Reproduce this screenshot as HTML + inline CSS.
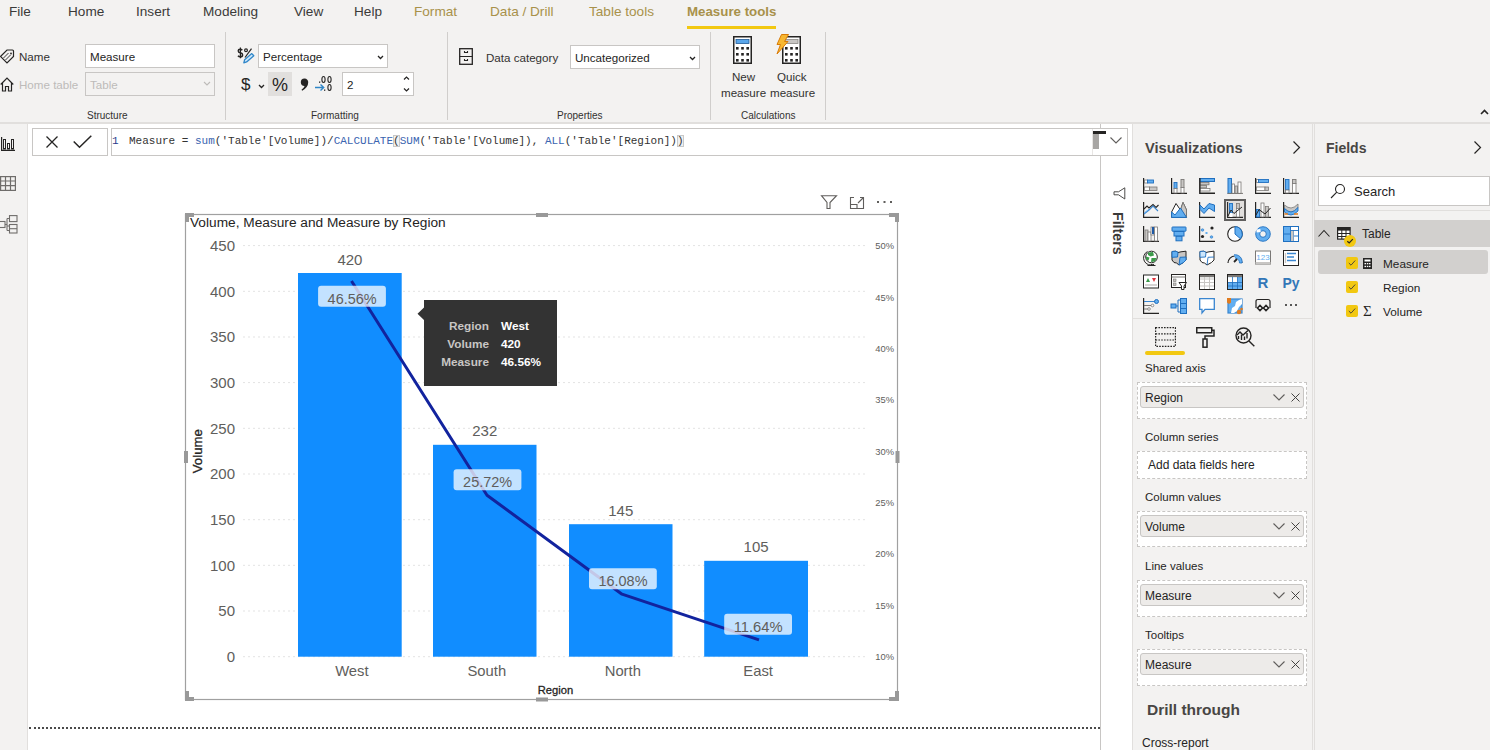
<!DOCTYPE html>
<html><head><meta charset="utf-8">
<style>
*{margin:0;padding:0;box-sizing:border-box}
html,body{width:1490px;height:750px;overflow:hidden;background:#f3f2f1;font-family:"Liberation Sans",sans-serif;color:#252423}
.a{position:absolute;white-space:nowrap}
.tab{position:absolute;top:3.8px;font-size:13.6px;color:#3b3a39}
.ctx{color:#a8914a}
.sep{position:absolute;width:1px;background:#d0cecc}
.box{position:absolute;background:#fff;border:1px solid #c8c6c4}
.grp{position:absolute;top:110px;font-size:10px;color:#323130}
.lbl{position:absolute;font-size:11.6px;color:#323130}
svg{position:absolute;overflow:visible}
.mono{font-family:"Liberation Mono",monospace}
</style></head>
<body>
<!-- ===== RIBBON ===== -->
<div id="ribbon" class="a" style="left:0;top:0;width:1490px;height:124px;background:#f3f2f1;border-bottom:2px solid #e1dfdd"></div>
<div class="tab" style="left:9px">File</div>
<div class="tab" style="left:68px">Home</div>
<div class="tab" style="left:136px">Insert</div>
<div class="tab" style="left:203px">Modeling</div>
<div class="tab" style="left:294px">View</div>
<div class="tab" style="left:354px">Help</div>
<div class="tab ctx" style="left:414px">Format</div>
<div class="tab ctx" style="left:490px">Data / Drill</div>
<div class="tab ctx" style="left:589px">Table tools</div>
<div class="tab ctx" style="left:687px;font-weight:bold;font-size:13.3px;top:4.3px">Measure tools</div>
<div class="a" style="left:687px;top:26px;width:89px;height:3px;background:#f2c811"></div>


<!-- Structure group -->
<svg style="left:0;top:49px" width="16" height="16" viewBox="0 0 16 16"><path d="M1.5 8.5 L8 2 L13.5 2 Q14.5 2 14.5 3 L14.5 8.5 L8 15 Z" fill="none" stroke="#252423" stroke-width="1.2" transform="translate(-1,-1)"/><circle cx="11" cy="4.5" r="0.9" fill="#252423"/><path d="M3.5 9 L8.5 4 M5.5 11 L10.5 6" stroke="#252423" stroke-width="0.9"/></svg>
<div class="lbl" style="left:19px;top:50px">Name</div>
<div class="box" style="left:85px;top:44px;width:130px;height:24px"></div>
<div class="lbl" style="left:90px;top:50px;color:#252423">Measure</div>
<svg style="left:0;top:76px" width="16" height="16" viewBox="0 0 16 16"><path d="M0.7 8.5 L7 2 L13.3 8.5 M2.5 6.5 L2.5 15 L5.5 15 L5.5 10.5 L8.5 10.5 L8.5 15 L11.5 15 L11.5 6.5" fill="none" stroke="#252423" stroke-width="1.2"/></svg>
<div class="lbl" style="left:19px;top:78px;color:#bdbbb9">Home table</div>
<div class="a" style="left:85px;top:72px;width:130px;height:24px;border:1px solid #c8c6c4;background:#f3f2f1"></div>
<div class="lbl" style="left:90px;top:78px;color:#bdbbb9">Table</div>
<svg style="left:203px;top:81px" width="8" height="5" viewBox="0 0 8 5"><path d="M1 1 L4 4 L7 1" fill="none" stroke="#bdbbb9" stroke-width="1.1"/></svg>
<div class="grp" style="left:87px">Structure</div>
<div class="sep" style="left:225px;top:32px;height:88px"></div>

<!-- Formatting group -->
<svg style="left:230px;top:40px" width="28" height="28" viewBox="230 40 28 28"><g fill="none" stroke="#252423"><path d="M242.3 50.2 Q241.5 49.2 240.2 49.2 Q238.3 49.2 238.3 50.9 Q238.3 52.3 240.4 52.8 Q242.6 53.4 242.6 55 Q242.6 56.8 240.3 56.8 Q238.8 56.8 238 55.7" stroke-width="1.5"/><path d="M240.4 47.6 V58.3" stroke-width="1.2"/><path d="M251.5 48.6 L245 57.5" stroke-width="1.2"/><circle cx="246" cy="50.3" r="1.4" stroke-width="1.2"/></g><path d="M243.8 62.8 L244.6 59.8 L251.8 53.6 L253.8 55.7 L246.6 61.9 Z" fill="#cfe8fb" stroke="#2f86c8" stroke-width="1.3" stroke-linejoin="round"/></svg>
<div class="box" style="left:258px;top:44px;width:130px;height:24px"></div>
<div class="lbl" style="left:263px;top:50px;color:#252423">Percentage</div>
<svg style="left:377px;top:55px" width="7" height="5" viewBox="0 0 7 5"><path d="M1 1 L3.5 3.5 L6 1" fill="none" stroke="#252423" stroke-width="1.3"/></svg>
<div class="a" style="left:241px;top:75px;font-size:17px;color:#252423">$</div>
<svg style="left:258px;top:84px" width="7" height="5" viewBox="0 0 7 5"><path d="M1 1 L3.5 3.5 L6 1" fill="none" stroke="#252423" stroke-width="1.3"/></svg>
<div class="a" style="left:268px;top:72px;width:24px;height:24px;background:#e1dfdd"></div>
<div class="a" style="left:272px;top:75px;font-size:18px;color:#252423">%</div>
<svg style="left:300px;top:77.5px" width="9" height="14" viewBox="0 0 9 14"><path d="M4.5 0.5 A3.6 3.6 0 0 1 8.2 4.5 Q8.2 9.2 2.2 12.8 L1.5 11.8 Q4.3 9.7 4.6 8 A3.7 3.7 0 1 1 4.5 0.5 Z" fill="#252423"/></svg>
<svg style="left:314px;top:74px" width="20" height="20" viewBox="314 74 20 20"><g fill="none" stroke="#252423" stroke-width="1.1"><ellipse cx="323.5" cy="79.5" rx="1.6" ry="3"/><ellipse cx="329.5" cy="79.5" rx="1.6" ry="3"/><ellipse cx="329.5" cy="87.5" rx="1.6" ry="3"/></g><g fill="#252423"><rect x="319" y="81.5" width="1.3" height="1.3"/><rect x="324" y="89.5" width="1.3" height="1.3"/></g><path d="M315 87.5 L323.5 87.5 M320.5 84.5 L323.7 87.5 L320.5 90.5" fill="none" stroke="#2f86c8" stroke-width="1.4"/></svg>
<div class="box" style="left:342px;top:72px;width:72px;height:24px"></div>
<div class="lbl" style="left:347px;top:78px;color:#252423">2</div>
<svg style="left:403px;top:75px" width="7" height="18" viewBox="0 0 7 18"><path d="M1 4.5 L3.5 2 L6 4.5 M1 13.5 L3.5 16 L6 13.5" fill="none" stroke="#252423" stroke-width="1.2"/></svg>
<div class="grp" style="left:311px">Formatting</div>
<div class="sep" style="left:447px;top:32px;height:88px"></div>

<!-- Properties group -->
<svg style="left:459px;top:48px" width="14" height="17" viewBox="0 0 14 17"><rect x="0.7" y="0.7" width="12.6" height="15.6" fill="none" stroke="#252423" stroke-width="1.3"/><path d="M0.7 8.5 L13.3 8.5 M5.5 3 L5.5 4.5 L8.5 4.5 L8.5 3 M5.5 11 L5.5 12.5 L8.5 12.5 L8.5 11" fill="none" stroke="#252423" stroke-width="1.1"/></svg>
<div class="lbl" style="left:486px;top:51px">Data category</div>
<div class="box" style="left:570px;top:45px;width:130px;height:24px"></div>
<div class="lbl" style="left:575px;top:51px;color:#252423">Uncategorized</div>
<svg style="left:689px;top:56px" width="7" height="5" viewBox="0 0 7 5"><path d="M1 1 L3.5 3.5 L6 1" fill="none" stroke="#252423" stroke-width="1.3"/></svg>
<div class="grp" style="left:557px">Properties</div>
<div class="sep" style="left:710px;top:32px;height:88px"></div>

<!-- Calculations group -->
<svg style="left:733px;top:36px" width="19" height="28" viewBox="0 0 19 28"><rect x="0.75" y="0.75" width="17.5" height="26.5" fill="#fff" stroke="#252423" stroke-width="1.5"/><rect x="3" y="3.5" width="13" height="4" fill="#5aa6ea" stroke="#1e5a96" stroke-width="0.8"/><g fill="#252423"><rect x="3" y="11" width="2.6" height="2.6"/><rect x="8.2" y="11" width="2.6" height="2.6"/><rect x="13.4" y="11" width="2.6" height="2.6"/><rect x="3" y="17" width="2.6" height="2.6"/><rect x="8.2" y="17" width="2.6" height="2.6"/><rect x="13.4" y="17" width="2.6" height="2.6"/><rect x="3" y="23" width="2.6" height="2.6"/><rect x="8.2" y="23" width="2.6" height="2.6"/><rect x="13.4" y="23" width="2.6" height="2.6"/></g></svg>
<svg style="left:782px;top:36px" width="19" height="28" viewBox="0 0 19 28"><rect x="0.75" y="0.75" width="17.5" height="26.5" fill="#fff" stroke="#252423" stroke-width="1.5"/><rect x="3" y="3.5" width="13" height="4" fill="#c8c6c4" stroke="#8a8886" stroke-width="0.8"/><g fill="#252423"><rect x="3" y="11" width="2.6" height="2.6"/><rect x="8.2" y="11" width="2.6" height="2.6"/><rect x="13.4" y="11" width="2.6" height="2.6"/><rect x="3" y="17" width="2.6" height="2.6"/><rect x="8.2" y="17" width="2.6" height="2.6"/><rect x="13.4" y="17" width="2.6" height="2.6"/><rect x="3" y="23" width="2.6" height="2.6"/><rect x="8.2" y="23" width="2.6" height="2.6"/><rect x="13.4" y="23" width="2.6" height="2.6"/></g></svg>
<svg style="left:776px;top:34px" width="14" height="21" viewBox="0 0 14 21"><path d="M5.5 0.5 L12.5 0.5 L8.5 7.5 L12 7.5 L1 20 L4.5 10.5 L1 10.5 Z" fill="#f7b731" stroke="#d97b06" stroke-width="1"/></svg>
<div class="lbl" style="left:732px;top:70px">New</div>
<div class="lbl" style="left:721px;top:86px">measure</div>
<div class="lbl" style="left:777px;top:70px">Quick</div>
<div class="lbl" style="left:770px;top:86px">measure</div>
<div class="grp" style="left:741px">Calculations</div>
<div class="sep" style="left:825px;top:32px;height:88px"></div>
<svg style="left:1480px;top:109px" width="9" height="6" viewBox="0 0 9 6"><path d="M1 5 L4.5 1.5 L8 5" fill="none" stroke="#252423" stroke-width="1.6"/></svg>


<!-- ===== LEFT NAV ===== -->
<div class="a" style="left:0;top:124px;width:28px;height:626px;background:#f3f2f1;border-right:1px solid #e1dfdd"></div>
<svg style="left:1px;top:137px" width="15" height="14" viewBox="0 0 15 14"><path d="M0.6 0 L0.6 13.4 L14 13.4" fill="none" stroke="#252423" stroke-width="1.2"/><g fill="none" stroke="#252423" stroke-width="1"><rect x="2.5" y="2.5" width="2" height="9.5"/><rect x="6.5" y="6.5" width="2" height="5.5"/><rect x="10.5" y="2.5" width="2" height="9.5"/></g></svg>
<svg style="left:0;top:176px" width="16" height="15" viewBox="0 0 16 15"><rect x="0.6" y="0.6" width="14.8" height="13.8" fill="none" stroke="#6f6d6b" stroke-width="1.2"/><path d="M0.6 5 L15.4 5 M0.6 9.7 L15.4 9.7 M5.5 0.6 L5.5 14.4 M10.5 0.6 L10.5 14.4" stroke="#6f6d6b" stroke-width="1.2"/></svg>
<svg style="left:0;top:215px" width="18" height="19" viewBox="0 0 18 19"><g fill="none" stroke="#6f6d6b" stroke-width="1.1"><rect x="9.5" y="0.6" width="7.5" height="6"/><rect x="9.5" y="9.5" width="7.5" height="8.5"/><path d="M9.5 13.7 H17"/><rect x="-2" y="6.5" width="7" height="6"/><path d="M5 9.5 H7 M7 3.5 V15.5 M7 3.5 H9.5 M7 11 H9.5 M7 15.5 H9.5"/></g></svg>

<!-- ===== CANVAS ===== -->
<div class="a" style="left:28px;top:124px;width:1073px;height:626px;background:#fff"></div>
<div class="a" style="left:29px;top:727px;width:1071px;height:0;border-top:2px dotted #4a4a4a"></div>

<!-- ===== CHART ===== -->
<svg style="left:0;top:0" width="1490" height="750" viewBox="0 0 1490 750" font-family="Liberation Sans, sans-serif">
<g fill="none" stroke="#605e5c" stroke-width="1.1"><path d="M821.5 195.7 L836.5 195.7 L830 202.5 L830 208.5 L827 208.5 L827 202.5 Z"/><path d="M854 197.5 L850.5 197.5 L850.5 208.5 L863.5 208.5 L863.5 197.5 L860 197.5 M850.5 204.5 L857 204.5 L857 208.5 M858 203 L863 198"/></g>
<g fill="#605e5c"><rect x="877" y="201" width="2" height="2"/><rect x="883.5" y="201" width="2" height="2"/><rect x="890" y="201" width="2" height="2"/></g>
<line x1="243" y1="656.7" x2="867" y2="656.7" stroke="#e3e3e3" stroke-width="1" stroke-dasharray="2 3"/>
<text x="235" y="662.0" font-size="15" fill="#605e5c" text-anchor="end">0</text>
<line x1="243" y1="611.0" x2="867" y2="611.0" stroke="#e3e3e3" stroke-width="1" stroke-dasharray="2 3"/>
<text x="235" y="616.3" font-size="15" fill="#605e5c" text-anchor="end">50</text>
<line x1="243" y1="565.3" x2="867" y2="565.3" stroke="#e3e3e3" stroke-width="1" stroke-dasharray="2 3"/>
<text x="235" y="570.6" font-size="15" fill="#605e5c" text-anchor="end">100</text>
<line x1="243" y1="519.7" x2="867" y2="519.7" stroke="#e3e3e3" stroke-width="1" stroke-dasharray="2 3"/>
<text x="235" y="525.0" font-size="15" fill="#605e5c" text-anchor="end">150</text>
<line x1="243" y1="474.0" x2="867" y2="474.0" stroke="#e3e3e3" stroke-width="1" stroke-dasharray="2 3"/>
<text x="235" y="479.3" font-size="15" fill="#605e5c" text-anchor="end">200</text>
<line x1="243" y1="428.3" x2="867" y2="428.3" stroke="#e3e3e3" stroke-width="1" stroke-dasharray="2 3"/>
<text x="235" y="433.6" font-size="15" fill="#605e5c" text-anchor="end">250</text>
<line x1="243" y1="382.6" x2="867" y2="382.6" stroke="#e3e3e3" stroke-width="1" stroke-dasharray="2 3"/>
<text x="235" y="387.9" font-size="15" fill="#605e5c" text-anchor="end">300</text>
<line x1="243" y1="337.0" x2="867" y2="337.0" stroke="#e3e3e3" stroke-width="1" stroke-dasharray="2 3"/>
<text x="235" y="342.3" font-size="15" fill="#605e5c" text-anchor="end">350</text>
<line x1="243" y1="291.3" x2="867" y2="291.3" stroke="#e3e3e3" stroke-width="1" stroke-dasharray="2 3"/>
<text x="235" y="296.6" font-size="15" fill="#605e5c" text-anchor="end">400</text>
<line x1="243" y1="245.6" x2="867" y2="245.6" stroke="#e3e3e3" stroke-width="1" stroke-dasharray="2 3"/>
<text x="235" y="250.9" font-size="15" fill="#605e5c" text-anchor="end">450</text>
<text x="894" y="660.1" font-size="9.4" fill="#605e5c" text-anchor="end">10%</text>
<text x="894" y="608.7" font-size="9.4" fill="#605e5c" text-anchor="end">15%</text>
<text x="894" y="557.4" font-size="9.4" fill="#605e5c" text-anchor="end">20%</text>
<text x="894" y="506.0" font-size="9.4" fill="#605e5c" text-anchor="end">25%</text>
<text x="894" y="454.6" font-size="9.4" fill="#605e5c" text-anchor="end">30%</text>
<text x="894" y="403.2" font-size="9.4" fill="#605e5c" text-anchor="end">35%</text>
<text x="894" y="351.9" font-size="9.4" fill="#605e5c" text-anchor="end">40%</text>
<text x="894" y="300.5" font-size="9.4" fill="#605e5c" text-anchor="end">45%</text>
<text x="894" y="249.1" font-size="9.4" fill="#605e5c" text-anchor="end">50%</text>
<rect x="298" y="273.0" width="103.7" height="383.7" fill="#118dff"/>
<text x="349.9" y="264.5" font-size="15" fill="#605e5c" text-anchor="middle">420</text>
<text x="351.9" y="676" font-size="14.8" fill="#605e5c" text-anchor="middle">West</text>
<rect x="433" y="444.8" width="103.5" height="211.9" fill="#118dff"/>
<text x="484.8" y="436.3" font-size="15" fill="#605e5c" text-anchor="middle">232</text>
<text x="486.8" y="676" font-size="14.8" fill="#605e5c" text-anchor="middle">South</text>
<rect x="569" y="524.2" width="103.5" height="132.5" fill="#118dff"/>
<text x="620.8" y="515.7" font-size="15" fill="#605e5c" text-anchor="middle">145</text>
<text x="622.8" y="676" font-size="14.8" fill="#605e5c" text-anchor="middle">North</text>
<rect x="704.2" y="560.8" width="103.8" height="95.9" fill="#118dff"/>
<text x="756.1" y="552.3" font-size="15" fill="#605e5c" text-anchor="middle">105</text>
<text x="758.1" y="676" font-size="14.8" fill="#605e5c" text-anchor="middle">East</text>
<polyline points="351.5,281.0 487.0,495.2 622.0,594.2 759.0,639.8" fill="none" stroke="#12239e" stroke-width="3" stroke-linejoin="round"/>
<rect x="318.1" y="285.8" width="67.8" height="21" rx="3" fill="#fff" fill-opacity="0.75"/>
<text x="352.1" y="303.5" font-size="15.2" fill="#605e5c" text-anchor="middle" textLength="49" lengthAdjust="spacingAndGlyphs">46.56%</text>
<rect x="453.6" y="469.2" width="67.8" height="21" rx="3" fill="#fff" fill-opacity="0.75"/>
<text x="487.6" y="486.9" font-size="15.2" fill="#605e5c" text-anchor="middle" textLength="49" lengthAdjust="spacingAndGlyphs">25.72%</text>
<rect x="589.0" y="568.2" width="67.8" height="21" rx="3" fill="#fff" fill-opacity="0.75"/>
<text x="623.0" y="585.9" font-size="15.2" fill="#605e5c" text-anchor="middle" textLength="49" lengthAdjust="spacingAndGlyphs">16.08%</text>
<rect x="724.2" y="613.8" width="67.8" height="21" rx="3" fill="#fff" fill-opacity="0.75"/>
<text x="758.2" y="631.5" font-size="15.2" fill="#605e5c" text-anchor="middle" textLength="49" lengthAdjust="spacingAndGlyphs">11.64%</text>
<text x="190" y="227" font-size="13.7" fill="#252423">Volume, Measure and Measure by Region</text>
<text x="555.5" y="694" font-size="11.2" fill="#252423" stroke="#252423" stroke-width="0.3" text-anchor="middle">Region</text>
<text transform="translate(202,451.2) rotate(-90)" font-size="13.2" fill="#252423" stroke="#252423" stroke-width="0.3" text-anchor="middle">Volume</text>
<rect x="185.5" y="214.5" width="712" height="485" fill="none" stroke="#a0a0a0" stroke-width="1.2"/>
<g fill="#999"><path d="M185 213 L194 213 L194 217 L189 217 L189 222 L185 222 Z"/><path d="M889 213 L899 213 L899 222 L895 222 L895 217 L889 217 Z"/><path d="M185 691 L189 691 L189 697 L194 697 L194 701 L185 701 Z"/><path d="M895 691 L899 691 L899 701 L889 701 L889 697 L895 697 Z"/><rect x="536" y="213" width="12" height="4"/><rect x="536" y="697.5" width="12" height="4"/><rect x="184" y="451" width="4" height="12"/><rect x="895.5" y="451" width="4" height="12"/></g>
<path d="M424 300 L557 300 L557 386 L424 386 L424 320 L417.5 313.8 L424 307.5 Z" fill="#333333"/>
<g font-size="11.8" font-weight="bold"><text x="489" y="330" fill="#c8c6c4" text-anchor="end">Region</text><text x="501" y="330" fill="#fff">West</text><text x="489" y="348" fill="#c8c6c4" text-anchor="end">Volume</text><text x="501" y="348" fill="#fff">420</text><text x="489" y="366" fill="#c8c6c4" text-anchor="end">Measure</text><text x="501" y="366" fill="#fff">46.56%</text></g>
</svg>
<!-- ===== FILTERS STRIP ===== -->
<div class="a" style="left:1100px;top:124px;width:33px;height:626px;background:#fff;border-left:1px solid #c8c6c4"></div>
<div class="a" style="left:1132px;top:124px;width:1px;height:626px;background:#e1dfdd"></div>
<svg style="left:1113px;top:187px" width="13" height="13" viewBox="0 0 13 13"><path d="M11.8 0.8 L11.8 12 L5.5 7.8 L1 7.8 L1 4.8 L5.5 4.8 Z" fill="none" stroke="#3b3a39" stroke-width="0.9" stroke-linejoin="round"/></svg>
<div class="a" style="left:1107px;top:212px;font-size:14.2px;font-weight:bold;color:#3b3a39;transform-origin:0 0;transform:translate(18.5px,0) rotate(90deg)">Filters</div>

<!-- Formula bar -->
<div class="a" style="left:32px;top:128px;width:76px;height:28px;border:1px solid #c8c6c4;background:#fff"></div>
<svg style="left:46px;top:136px" width="12" height="12" viewBox="0 0 12 12"><path d="M0.5 0.5 L11.5 11.5 M11.5 0.5 L0.5 11.5" stroke="#252423" stroke-width="1.3"/></svg>
<svg style="left:73px;top:135px" width="19" height="13" viewBox="0 0 19 13"><path d="M0.7 6.5 L6.5 12.3 L18.3 0.7" fill="none" stroke="#252423" stroke-width="1.5"/></svg>
<div class="a" style="left:111px;top:128px;width:1017px;height:28px;border:1px solid #c8c6c4;background:#fff"></div>
<div class="a" style="left:1092px;top:129px;width:1px;height:26px;background:#e8e6e4"></div>
<div class="a" style="left:1093px;top:131px;width:6px;height:18px;background:#a8a6a4"></div>
<div class="a" style="left:1093px;top:131px;width:13px;height:2.5px;background:#252423"></div>
<svg style="left:1110px;top:137px" width="12" height="7" viewBox="0 0 12 7"><path d="M0.5 0.5 L6 6 L11.5 0.5" fill="none" stroke="#605e5c" stroke-width="1.1"/></svg>
<div class="a mono" style="left:112px;top:135px;font-size:11px;color:#2b3b8c">1</div>
<div class="a mono" style="left:129px;top:135px;font-size:11px;color:#333">Measure = <span style="color:#3a64b0">sum</span>('Table'[Volume])/<span style="color:#3a64b0">CALCULATE</span><span style="outline:1px solid #c8c8c8;outline-offset:-1px;background:#f0f0f0">(</span><span style="color:#3a64b0">SUM</span>('Table'[Volume]), <span style="color:#3a64b0">ALL</span>('Table'[Region])<span style="outline:1px solid #c8c8c8;outline-offset:-1px;background:#f0f0f0">)</span></div>

<!-- ===== VISUALIZATIONS PANE ===== -->
<div class="a" style="left:1133px;top:124px;width:180px;height:626px;background:#f3f2f1;border-right:1px solid #e1dfdd"></div>
<div class="a" style="left:1145px;top:140px;font-size:14.7px;font-weight:bold;color:#484644">Visualizations</div>
<svg style="left:1293px;top:141px" width="7" height="13" viewBox="0 0 7 13"><path d="M0.5 0.5 L6.5 6.5 L0.5 12.5" fill="none" stroke="#252423" stroke-width="1.2"/></svg>
<div class="a" style="left:1133px;top:318px;width:180px;height:1px;background:#e1dfdd"></div>

<!-- VIZ ICONS -->
<div class="a" style="left:1224px;top:199px;width:22px;height:22px;border:2px solid #5f5e5d;background:#e1dfdd"></div>
<svg style="left:1143px;top:178px" width="16" height="16" viewBox="0 0 16 16"><path d="M0.6 0 V15.4 H16" fill="none" stroke="#252423" stroke-width="1.2"/><rect x="1.5" y="2" width="3" height="3" fill="#fff" stroke="#7a7876" stroke-width="0.8"/><rect x="4.5" y="2" width="6" height="3" fill="#62aef0" stroke="#1f6fbf" stroke-width="0.9"/><rect x="1.5" y="9" width="5" height="3.5" fill="#fff" stroke="#7a7876" stroke-width="0.8"/><rect x="6.5" y="9" width="7.5" height="3.5" fill="#c8c6c4" stroke="#7a7876" stroke-width="0.8"/></svg>
<svg style="left:1171px;top:178px" width="16" height="16" viewBox="0 0 16 16"><path d="M0.6 0 V15.4 H16" fill="none" stroke="#252423" stroke-width="1.2"/><rect x="3" y="4.5" width="3" height="6" fill="#62aef0" stroke="#1f6fbf" stroke-width="0.9"/><rect x="3" y="10.5" width="3" height="4.5" fill="#fff" stroke="#7a7876" stroke-width="0.8"/><rect x="10" y="1.5" width="3" height="8" fill="#c8c6c4" stroke="#7a7876" stroke-width="0.9"/><rect x="10" y="9.5" width="3" height="5.5" fill="#fff" stroke="#7a7876" stroke-width="0.8"/></svg>
<svg style="left:1199px;top:178px" width="16" height="16" viewBox="0 0 16 16"><rect x="1" y="0.5" width="14.5" height="3" fill="#62aef0" stroke="#1f6fbf" stroke-width="1"/><rect x="1" y="4.5" width="9" height="2.3" fill="#c8c6c4" stroke="#7a7876" stroke-width="0.8"/><rect x="1" y="7.5" width="6.5" height="2.3" fill="#c8c6c4" stroke="#7a7876" stroke-width="0.8"/><rect x="1" y="10.5" width="10" height="2.5" fill="#fff" stroke="#7a7876" stroke-width="0.8"/><path d="M0.8 0 V15.2 H16" fill="none" stroke="#252423" stroke-width="1.4"/></svg>
<svg style="left:1227px;top:178px" width="16" height="16" viewBox="0 0 16 16"><rect x="1" y="0.5" width="3.5" height="15" fill="#62aef0" stroke="#1f6fbf" stroke-width="1"/><rect x="5" y="6" width="2.5" height="9.5" fill="#fff" stroke="#7a7876" stroke-width="0.8"/><rect x="8" y="8" width="2.5" height="7.5" fill="#c8c6c4" stroke="#7a7876" stroke-width="0.8"/><rect x="11" y="4" width="3" height="11.5" fill="#fff" stroke="#7a7876" stroke-width="0.8"/><path d="M0.5 15.4 H16" stroke="#7a7876" stroke-width="1"/></svg>
<svg style="left:1255px;top:178px" width="16" height="16" viewBox="0 0 16 16"><path d="M0.6 0 V15.4 H16" fill="none" stroke="#252423" stroke-width="1.2"/><rect x="1.5" y="1.5" width="2" height="3" fill="#fff" stroke="#7a7876" stroke-width="0.8"/><rect x="3.5" y="1.5" width="10" height="3" fill="#62aef0" stroke="#1f6fbf" stroke-width="0.9"/><rect x="1.5" y="9" width="8.5" height="3.5" fill="#fff" stroke="#7a7876" stroke-width="0.8"/><rect x="10" y="9" width="3.5" height="3.5" fill="#c8c6c4" stroke="#7a7876" stroke-width="0.8"/></svg>
<svg style="left:1283px;top:178px" width="16" height="16" viewBox="0 0 16 16"><path d="M0.6 0 V15.4 H16" fill="none" stroke="#252423" stroke-width="1.2"/><rect x="2.5" y="1.5" width="3.5" height="10.5" fill="#62aef0" stroke="#1f6fbf" stroke-width="0.9"/><rect x="2.5" y="12" width="3.5" height="3" fill="#fff" stroke="#7a7876" stroke-width="0.8"/><rect x="9.5" y="1.5" width="3.5" height="4" fill="#c8c6c4" stroke="#7a7876" stroke-width="0.9"/><rect x="9.5" y="5.5" width="3.5" height="9.5" fill="#fff" stroke="#7a7876" stroke-width="0.8"/></svg>
<svg style="left:1143px;top:202px" width="16" height="16" viewBox="0 0 16 16"><path d="M0.6 0 V15.4 H16" fill="none" stroke="#252423" stroke-width="1.2"/><path d="M1 7 L4 4 L6 6 L10 2.5 L13 5.5 L15.5 3" fill="none" stroke="#252423" stroke-width="1.1"/><path d="M1 12 L6 8 L10 4 L15 9" fill="none" stroke="#3a86d0" stroke-width="1.1"/><path d="M1.2 11 L6 7.2" stroke="#62aef0" stroke-width="1"/></svg>
<svg style="left:1171px;top:202px" width="16" height="16" viewBox="0 0 16 16"><path d="M0.6 15.4 V10 L5 1.5 L9.5 8 L12 0.5 L15.5 8 V15.4 Z" fill="#fff" stroke="#252423" stroke-width="1"/><path d="M9.5 8 L12 0.5 L15.5 8 V15.4 Z" fill="#c8c6c4" stroke="#7a7876" stroke-width="0.8"/><path d="M0.6 15.4 V10 L4 13 L9.5 6 L15.5 15.4 Z" fill="#62aef0" stroke="#1f6fbf" stroke-width="1"/></svg>
<svg style="left:1199px;top:202px" width="16" height="16" viewBox="0 0 16 16"><path d="M0.6 0 V15.4 H16" fill="none" stroke="#252423" stroke-width="1.2"/><path d="M1 3 L5 7 L10 1.5 L15.5 3 V9.5 L10 6 L5 11.5 L1 7.5 Z" fill="#62aef0" stroke="#1f6fbf" stroke-width="1"/></svg>
<svg style="left:1227px;top:202px" width="16" height="16" viewBox="0 0 16 16"><path d="M0.6 0 V15.4 H16" fill="none" stroke="#252423" stroke-width="1.1"/><rect x="2.5" y="1.5" width="3" height="9.5" fill="#62aef0" stroke="#1f6fbf" stroke-width="0.9"/><rect x="2.5" y="11" width="3" height="4" fill="#fff"/><rect x="9.5" y="1.5" width="3" height="5" fill="#c8c6c4" stroke="#7a7876" stroke-width="0.8"/><rect x="9.5" y="6.5" width="3" height="8.5" fill="#fff" stroke="#7a7876" stroke-width="0.7"/><path d="M1 14 L4 8 L7 11.5 L10 9 L15 5" fill="none" stroke="#252423" stroke-width="1"/></svg>
<svg style="left:1255px;top:202px" width="16" height="16" viewBox="0 0 16 16"><path d="M0.6 0 V15.4 H16" fill="none" stroke="#252423" stroke-width="1.2"/><rect x="1.5" y="7.5" width="3" height="7.5" fill="#62aef0" stroke="#1f6fbf" stroke-width="0.9"/><rect x="6" y="1" width="3" height="14" fill="#fff" stroke="#7a7876" stroke-width="0.8"/><rect x="10.5" y="4.5" width="3" height="10.5" fill="#c8c6c4" stroke="#7a7876" stroke-width="0.8"/><path d="M1 13 L4 7.5 L10 12 L15.5 6" fill="none" stroke="#252423" stroke-width="1"/></svg>
<svg style="left:1283px;top:202px" width="16" height="16" viewBox="0 0 16 16"><path d="M0.6 0 V15.4 H16" fill="none" stroke="#252423" stroke-width="1.2"/><path d="M1.5 3 Q5 6 8 6 Q11 6 15 2 V6 Q11 10 8 10 Q5 10 1.5 7 Z" fill="#c8c6c4" stroke="#7a7876" stroke-width="0.8"/><path d="M1.5 6.5 Q5 10 8 10 Q11 10 15 5.5 V9 Q11 13 8 13 Q5 13 1.5 10 Z" fill="#62aef0" stroke="#1f6fbf" stroke-width="0.9"/><path d="M1.5 12 H5 M11 12 H15" stroke="#e07b1f" stroke-width="1.6"/></svg>
<svg style="left:1143px;top:226px" width="16" height="16" viewBox="0 0 16 16"><path d="M0.6 0 V15.4 H16" fill="none" stroke="#252423" stroke-width="1.2"/><rect x="2" y="4" width="3" height="11" fill="#c8c6c4" stroke="#7a7876" stroke-width="0.8"/><rect x="5" y="6" width="3" height="9" fill="#fff" stroke="#7a7876" stroke-width="0.8"/><rect x="8" y="1" width="3" height="8" fill="#fff" stroke="#7a7876" stroke-width="0.8"/><rect x="9" y="1" width="2" height="7" fill="#1f5aa6"/><rect x="11.5" y="1" width="3" height="14" fill="#fff" stroke="#7a7876" stroke-width="0.8"/></svg>
<svg style="left:1171px;top:226px" width="16" height="16" viewBox="0 0 16 16"><rect x="1" y="1" width="14" height="4.2" rx="0.5" fill="#62aef0" stroke="#1f6fbf" stroke-width="1"/><rect x="3" y="5.5" width="10" height="4.5" fill="#62aef0" stroke="#1f6fbf" stroke-width="1"/><rect x="5" y="10.3" width="6" height="4.5" fill="#62aef0" stroke="#1f6fbf" stroke-width="1"/></svg>
<svg style="left:1199px;top:226px" width="16" height="16" viewBox="0 0 16 16"><path d="M0.6 0 V15.4 H16" fill="none" stroke="#252423" stroke-width="1.2"/><circle cx="13" cy="2" r="1.6" fill="#252423"/><circle cx="3.5" cy="10.5" r="1.6" fill="#252423"/><circle cx="3.5" cy="4" r="1.3" fill="#62aef0" stroke="#1f6fbf" stroke-width="0.5"/><rect x="6.5" y="6" width="2" height="2" fill="#62aef0"/><circle cx="12.5" cy="11" r="1.3" fill="#62aef0" stroke="#1f6fbf" stroke-width="0.5"/></svg>
<svg style="left:1227px;top:226px" width="16" height="16" viewBox="0 0 16 16"><circle cx="8" cy="8" r="7.3" fill="#fff" stroke="#252423" stroke-width="1.1"/><path d="M8 8 V0.7 A7.3 7.3 0 0 1 13.5 12.8 Z" fill="#62aef0" stroke="#1f6fbf" stroke-width="1"/></svg>
<svg style="left:1255px;top:226px" width="16" height="16" viewBox="0 0 16 16"><circle cx="8" cy="8" r="5.3" fill="none" stroke="#62aef0" stroke-width="4"/><circle cx="8" cy="8" r="7.3" fill="none" stroke="#1f6fbf" stroke-width="0.9"/><circle cx="8" cy="8" r="3.3" fill="none" stroke="#1f6fbf" stroke-width="0.9"/><path d="M5.5 4.5 L1.5 5" stroke="#fff" stroke-width="3" fill="none"/></svg>
<svg style="left:1283px;top:226px" width="16" height="16" viewBox="0 0 16 16"><rect x="0.5" y="0.5" width="15" height="15" fill="#fff" stroke="#1f6fbf" stroke-width="1"/><rect x="1" y="1" width="6.5" height="14" fill="#62aef0"/><path d="M0.5 8 H7.5 M7.5 0.5 V15.5 M7.5 4.5 H15.5 M10.5 4.5 V15.5 M10.5 10 H15.5" stroke="#1f6fbf" stroke-width="0.9"/><rect x="8" y="5" width="2.5" height="10" fill="#c8c6c4"/></svg>
<svg style="left:1143px;top:250px" width="16" height="16" viewBox="0 0 16 16"><circle cx="8.5" cy="7" r="5.8" fill="#fff" stroke="#252423" stroke-width="1"/><path d="M5 2.5 L10 2 L11 5.5 L7.5 6.5 L5 5 Z M8.5 8 L13.5 8 L12 11.5 L8 12 Z M3 6.5 L6.5 7.5 L5.5 10.5 L3 9.5 Z" fill="#3b9a4a"/><path d="M4.5 1.5 A6.8 6.8 0 0 0 11 14.3 M8.5 14 V15.3 M4.5 15.5 H12.5" fill="none" stroke="#252423" stroke-width="1"/></svg>
<svg style="left:1171px;top:250px" width="16" height="16" viewBox="0 0 16 16"><path d="M1 1.5 L5 1.2 L7 2.5 L10 1.8 L15 1.2 L15 10 L12.5 12.5 L8 15 L5.5 13 L3 12.5 L1 10 Z" fill="#c8c6c4" stroke="#252423" stroke-width="1"/><path d="M1 1.5 L5 1.2 L7 2.5 L6.5 7 L1 7.3 Z" fill="#62aef0" stroke="#1f6fbf" stroke-width="1"/><path d="M15 7 L9 7.3 L8 15 L12.5 12.5 L15 10 Z" fill="#62aef0" stroke="#1f6fbf" stroke-width="1"/></svg>
<svg style="left:1199px;top:250px" width="16" height="16" viewBox="0 0 16 16"><path d="M1 1.5 L5 1.2 L7 2.5 L10 1.8 L15 1.2 L15 10 L12.5 12.5 L8 15 L5.5 13 L3 12.5 L1 10 Z" fill="#fff" stroke="#252423" stroke-width="1"/><path d="M1 1.5 L5 1.2 L7 2.5 L6.5 7 L1 7.3 Z" fill="#cde6fb" stroke="#1f6fbf" stroke-width="0.9"/><path d="M15 7 L9 7.3 L8 15" fill="none" stroke="#1f6fbf" stroke-width="0.9"/></svg>
<svg style="left:1227px;top:250px" width="16" height="16" viewBox="0 0 16 16"><path d="M1 13 A7 7 0 0 1 15 13" fill="none" stroke="#252423" stroke-width="1.2"/><path d="M7 4.8 A7 7 0 0 1 15 13 H12.5 A4.7 4.7 0 0 0 8 8" fill="#62aef0" stroke="#1f6fbf" stroke-width="0.8"/><path d="M7 12 L10 9" stroke="#252423" stroke-width="1.8"/></svg>
<svg style="left:1255px;top:250px" width="16" height="16" viewBox="0 0 16 16"><rect x="0.5" y="1" width="15" height="13" fill="#fff" stroke="#7a7876" stroke-width="1"/><rect x="0.5" y="12" width="15" height="2" fill="#c8c6c4"/><text x="8" y="10" font-size="8" text-anchor="middle" fill="#62aef0" font-family="Liberation Sans">123</text></svg>
<svg style="left:1283px;top:250px" width="16" height="16" viewBox="0 0 16 16"><rect x="0.5" y="0.5" width="15" height="15" fill="#fff" stroke="#252423" stroke-width="1"/><path d="M4 3.5 H13 M4 7 H11 M4 10.5 H13" stroke="#3a86d0" stroke-width="1.6"/><path d="M2.5 3 V13" stroke="#c8c6c4" stroke-width="1.3"/></svg>
<svg style="left:1143px;top:274px" width="16" height="16" viewBox="0 0 16 16"><rect x="0.5" y="1" width="15" height="13" fill="#fff" stroke="#252423" stroke-width="1"/><path d="M3 8 L5 4 L7 8 Z" fill="#3a9a4a"/><path d="M9 4 L13 4 L11 8 Z" fill="#e0323c"/><path d="M2 11 H14" stroke="#c8c6c4" stroke-width="1.5"/></svg>
<svg style="left:1171px;top:274px" width="16" height="16" viewBox="0 0 16 16"><rect x="0.5" y="0.5" width="14" height="13" fill="#fff" stroke="#252423" stroke-width="1"/><path d="M0.5 3 H14.5" stroke="#7a7876" stroke-width="1"/><rect x="2.5" y="5" width="2.5" height="2.5" fill="#c8c6c4" stroke="#7a7876" stroke-width="0.6"/><rect x="2.5" y="9" width="2.5" height="2.5" fill="#c8c6c4" stroke="#7a7876" stroke-width="0.6"/><path d="M8 8.5 H15.5 L13 12 V15.5 H10.5 V12 Z" fill="#fff" stroke="#252423" stroke-width="1"/></svg>
<svg style="left:1199px;top:274px" width="16" height="16" viewBox="0 0 16 16"><rect x="0.5" y="0.5" width="15" height="15" fill="#fff" stroke="#252423" stroke-width="1"/><rect x="1" y="1" width="14" height="2.2" fill="#7a7876"/><path d="M1 8.5 H15 M1 12 H15 M5.5 3 V15 M10.5 3 V15 M1 5 H15" stroke="#c8c6c4" stroke-width="1"/></svg>
<svg style="left:1227px;top:274px" width="16" height="16" viewBox="0 0 16 16"><rect x="0.5" y="0.5" width="15" height="15" fill="#62aef0" stroke="#252423" stroke-width="1"/><rect x="1" y="1" width="14" height="2.2" fill="#7a7876"/><rect x="1" y="3.2" width="9.5" height="5" fill="#fff"/><path d="M1 8.5 H15 M1 12 H15 M5.5 3 V15 M10.5 3 V15" stroke="#1f6fbf" stroke-width="0.8"/></svg>
<svg style="left:1255px;top:274px" width="16" height="16" viewBox="0 0 16 16"><text x="8" y="14" font-size="15" font-weight="bold" text-anchor="middle" fill="#3277b8" font-family="Liberation Sans">R</text></svg>
<svg style="left:1283px;top:274px" width="16" height="16" viewBox="0 0 16 16"><text x="8" y="13.5" font-size="14" font-weight="bold" text-anchor="middle" fill="#3277b8" font-family="Liberation Sans">Py</text></svg>
<svg style="left:1143px;top:298px" width="16" height="16" viewBox="0 0 16 16"><path d="M0.6 0 V15.4 H16" fill="none" stroke="#252423" stroke-width="1.2"/><path d="M1 3.5 H11 M1 7.5 H8 M1 11 H5" stroke="#7a7876" stroke-width="1"/><path d="M1 3.5 H12" stroke="#3a86d0" stroke-width="1"/><circle cx="13.5" cy="3.5" r="2" fill="#62aef0" stroke="#1f6fbf" stroke-width="1"/><circle cx="9.5" cy="7.5" r="1.3" fill="#fff" stroke="#7a7876" stroke-width="0.8"/><circle cx="6" cy="11" r="1.3" fill="#fff" stroke="#7a7876" stroke-width="0.8"/></svg>
<svg style="left:1171px;top:298px" width="16" height="16" viewBox="0 0 16 16"><rect x="0" y="6" width="5" height="4" fill="#62aef0" stroke="#1f6fbf" stroke-width="1"/><path d="M5 8 H7 M7 2 V14 M7 2 H9 M7 14 H9" stroke="#1f6fbf" stroke-width="1" fill="none"/><rect x="9.5" y="0.5" width="6" height="15" fill="#62aef0" stroke="#1f6fbf" stroke-width="1"/><path d="M9.5 5.5 H15.5 M9.5 10.5 H15.5" stroke="#1f6fbf" stroke-width="1"/></svg>
<svg style="left:1199px;top:298px" width="16" height="16" viewBox="0 0 16 16"><path d="M0.7 0.7 H15.3 V11.3 H6 L3 15 V11.3 H0.7 Z" fill="#fff" stroke="#3a86d0" stroke-width="1.3"/></svg>
<svg style="left:1227px;top:298px" width="16" height="16" viewBox="0 0 16 16"><rect x="1" y="1" width="14" height="14" fill="#62aef0" stroke="#3a86d0" stroke-width="1.2"/><path d="M4 15 L5 10 L8 8 L9 4 L12 2 L15 1 V6 L12 9 L10 13 L7 15 Z" fill="#fff"/><path d="M0 0 H4 V4.5 L2 6 L0 4.5 Z" fill="#e07b1f"/><circle cx="12" cy="14" r="2.2" fill="#e07b1f"/><circle cx="14.5" cy="11" r="1.3" fill="#e07b1f"/></svg>
<svg style="left:1255px;top:298px" width="16" height="16" viewBox="0 0 16 16"><path d="M1 10 V3.5 Q1 1.5 3 1.5 H13 Q15 1.5 15 3.5 V10" fill="none" stroke="#252423" stroke-width="1.2"/><path d="M2.5 10 L5 7.5 L7.5 10 L5 12.5 Z M8.5 10 L11 7.5 L13.5 10 L11 12.5 Z" fill="#fff" stroke="#252423" stroke-width="1.6"/></svg>
<svg style="left:1283px;top:298px" width="16" height="16" viewBox="0 0 16 16"><circle cx="3" cy="7" r="1" fill="#252423"/><circle cx="8" cy="7" r="1" fill="#252423"/><circle cx="13" cy="7" r="1" fill="#252423"/></svg>
<!-- /VIZ ICONS -->
<!-- tabs -->
<svg style="left:1155px;top:327px" width="21" height="20" viewBox="0 0 21 20"><g fill="none" stroke="#252423" stroke-width="1.2" stroke-dasharray="1.6 1.2"><rect x="0.6" y="0.6" width="19.8" height="18.8"/><path d="M0.6 6.8 L20.4 6.8 M0.6 13 L20.4 13"/></g></svg>
<div class="a" style="left:1145px;top:351px;width:40px;height:4px;border-radius:2px;background:#f2c811"></div>
<svg style="left:1196px;top:327px" width="19" height="21" viewBox="0 0 19 21"><g fill="none" stroke="#252423" stroke-width="1.5"><rect x="0.75" y="0.75" width="15" height="5"/><path d="M15.75 3.25 L18 3.25 L18 9 L9 9 L9 12"/><rect x="7" y="12" width="4" height="8.2"/></g></svg>
<svg style="left:1235px;top:327px" width="20" height="20" viewBox="0 0 20 20"><g fill="none" stroke="#252423" stroke-width="1.4"><circle cx="8.5" cy="8.5" r="7.5"/><path d="M14 14 L19.3 19.3"/><path d="M3.5 12 L3.5 9 M6.5 13 L6.5 7.5 M9.5 13 L9.5 9.5 M12 11.5 L12 6"/><path d="M2 8 L5 5 L8 8 L13 3.5"/></g></svg>
<div class="a" style="left:1145px;top:362px;font-size:11.5px;color:#252423">Shared axis</div>
<div class="a" style="left:1137px;top:382px;width:170px;height:37px;border:1px dashed #c8c6c4;background:#fff"></div>
<div class="a" style="left:1140px;top:386px;width:164px;height:22px;border:1px solid #c8c6c4;border-radius:3px;background:#edebe9"></div>
<div class="a" style="left:1145px;top:391px;font-size:12px;color:#252423">Region</div>
<svg style="left:1273px;top:394px" width="12" height="7" viewBox="0 0 12 7"><path d="M0.5 0.5 L6 6 L11.5 0.5" fill="none" stroke="#605e5c" stroke-width="1.1"/></svg>
<svg style="left:1291px;top:393px" width="9" height="9" viewBox="0 0 9 9"><path d="M0.5 0.5 L8.5 8.5 M8.5 0.5 L0.5 8.5" stroke="#3b3a39" stroke-width="0.95"/></svg>
<div class="a" style="left:1145px;top:431px;font-size:11.5px;color:#252423">Column series</div>
<div class="a" style="left:1137px;top:451px;width:170px;height:28px;border:1px dashed #c8c6c4;background:#fff"></div>
<div class="a" style="left:1148px;top:458px;font-size:12px;color:#252423">Add data fields here</div>
<div class="a" style="left:1145px;top:491px;font-size:11.5px;color:#252423">Column values</div>
<div class="a" style="left:1137px;top:511px;width:170px;height:36px;border:1px dashed #c8c6c4;background:#fff"></div>
<div class="a" style="left:1140px;top:515px;width:164px;height:22px;border:1px solid #c8c6c4;border-radius:3px;background:#edebe9"></div>
<div class="a" style="left:1145px;top:520px;font-size:12px;color:#252423">Volume</div>
<svg style="left:1273px;top:523px" width="12" height="7" viewBox="0 0 12 7"><path d="M0.5 0.5 L6 6 L11.5 0.5" fill="none" stroke="#605e5c" stroke-width="1.1"/></svg>
<svg style="left:1291px;top:522px" width="9" height="9" viewBox="0 0 9 9"><path d="M0.5 0.5 L8.5 8.5 M8.5 0.5 L0.5 8.5" stroke="#3b3a39" stroke-width="0.95"/></svg>
<div class="a" style="left:1145px;top:560px;font-size:11.5px;color:#252423">Line values</div>
<div class="a" style="left:1137px;top:580px;width:170px;height:37px;border:1px dashed #c8c6c4;background:#fff"></div>
<div class="a" style="left:1140px;top:584px;width:164px;height:22px;border:1px solid #c8c6c4;border-radius:3px;background:#edebe9"></div>
<div class="a" style="left:1145px;top:589px;font-size:12px;color:#252423">Measure</div>
<svg style="left:1273px;top:592px" width="12" height="7" viewBox="0 0 12 7"><path d="M0.5 0.5 L6 6 L11.5 0.5" fill="none" stroke="#605e5c" stroke-width="1.1"/></svg>
<svg style="left:1291px;top:591px" width="9" height="9" viewBox="0 0 9 9"><path d="M0.5 0.5 L8.5 8.5 M8.5 0.5 L0.5 8.5" stroke="#3b3a39" stroke-width="0.95"/></svg>
<div class="a" style="left:1145px;top:629px;font-size:11.5px;color:#252423">Tooltips</div>
<div class="a" style="left:1137px;top:649px;width:170px;height:37px;border:1px dashed #c8c6c4;background:#fff"></div>
<div class="a" style="left:1140px;top:653px;width:164px;height:22px;border:1px solid #c8c6c4;border-radius:3px;background:#edebe9"></div>
<div class="a" style="left:1145px;top:658px;font-size:12px;color:#252423">Measure</div>
<svg style="left:1273px;top:661px" width="12" height="7" viewBox="0 0 12 7"><path d="M0.5 0.5 L6 6 L11.5 0.5" fill="none" stroke="#605e5c" stroke-width="1.1"/></svg>
<svg style="left:1291px;top:660px" width="9" height="9" viewBox="0 0 9 9"><path d="M0.5 0.5 L8.5 8.5 M8.5 0.5 L0.5 8.5" stroke="#3b3a39" stroke-width="0.95"/></svg>
<div class="a" style="left:1147px;top:701px;font-size:15.5px;font-weight:bold;color:#484644">Drill through</div>
<div class="a" style="left:1142px;top:736px;font-size:12px;color:#252423">Cross-report</div>


<!-- ===== FIELDS PANE ===== -->
<div class="a" style="left:1314px;top:124px;width:176px;height:626px;background:#f3f2f1;border-left:1px solid #e1dfdd"></div>
<div class="a" style="left:1326px;top:140px;font-size:14px;font-weight:bold;color:#484644">Fields</div>
<svg style="left:1474px;top:141px" width="7" height="13" viewBox="0 0 7 13"><path d="M0.5 0.5 L6.5 6.5 L0.5 12.5" fill="none" stroke="#252423" stroke-width="1.2"/></svg>
<div class="a" style="left:1318px;top:176px;width:172px;height:30px;background:#fff;border:1px solid #c8c6c4"></div>
<svg style="left:1330px;top:183px" width="16" height="16" viewBox="0 0 16 16"><circle cx="10" cy="6" r="4.5" fill="none" stroke="#252423" stroke-width="1.1"/><path d="M6.8 9.2 L1 15" stroke="#252423" stroke-width="1.1"/></svg>
<div class="a" style="left:1354px;top:184px;font-size:13px;color:#252423">Search</div>
<div class="a" style="left:1314px;top:210px;width:176px;height:1px;background:#e1dfdd"></div>


<div class="a" style="left:1314px;top:220px;width:176px;height:27px;background:#d2d0ce"></div>
<svg style="left:1318px;top:229px" width="12" height="8" viewBox="0 0 12 8"><path d="M0.5 7.5 L6 1.5 L11.5 7.5" fill="none" stroke="#252423" stroke-width="1.1"/></svg>
<svg style="left:1337px;top:227px" width="14" height="13" viewBox="0 0 14 13"><rect x="0.6" y="0.6" width="12.5" height="11.5" fill="#fff" stroke="#252423" stroke-width="1.2"/><rect x="0.6" y="0.6" width="12.5" height="3" fill="#252423"/><path d="M0.6 6.5 L13 6.5 M0.6 9.5 L13 9.5 M4.8 0.6 L4.8 12 M9 0.6 L9 12" stroke="#252423" stroke-width="1"/></svg>
<svg style="left:1344px;top:235px" width="12" height="12" viewBox="0 0 12 12"><circle cx="6" cy="6" r="6" fill="#f2c811"/><path d="M3.3 6.2 L5.2 8 L8.8 4.2" fill="none" stroke="#252423" stroke-width="1.2"/></svg>
<div class="a" style="left:1362px;top:227px;font-size:12px;color:#252423">Table</div>
<div class="a" style="left:1318px;top:250px;width:170px;height:24px;border-radius:3px;background:#d2d0ce"></div>
<div class="a" style="left:1346px;top:257px;width:12px;height:12px;border-radius:2px;background:#f2c811"></div>
<svg style="left:1348px;top:259px" width="8" height="8" viewBox="0 0 8 8"><path d="M0.8 4 L3 6.2 L7.2 1.5" fill="none" stroke="#3b3a39" stroke-width="0.9"/></svg>
<svg style="left:1363px;top:258px" width="9" height="11" viewBox="0 0 9 11"><rect x="0" y="0" width="9" height="11" fill="#252423"/><rect x="1.5" y="1.5" width="6" height="2" fill="#fff"/><g fill="#fff"><rect x="1.5" y="5" width="1.5" height="1.3"/><rect x="3.8" y="5" width="1.5" height="1.3"/><rect x="6" y="5" width="1.5" height="1.3"/><rect x="1.5" y="7.8" width="1.5" height="1.3"/><rect x="3.8" y="7.8" width="1.5" height="1.3"/><rect x="6" y="7.8" width="1.5" height="1.3"/></g></svg>
<div class="a" style="left:1383px;top:257px;font-size:11.8px;color:#252423">Measure</div>
<div class="a" style="left:1346px;top:281px;width:12px;height:12px;border-radius:2px;background:#f2c811"></div>
<svg style="left:1348px;top:283px" width="8" height="8" viewBox="0 0 8 8"><path d="M0.8 4 L3 6.2 L7.2 1.5" fill="none" stroke="#3b3a39" stroke-width="0.9"/></svg>
<div class="a" style="left:1383px;top:281px;font-size:11.8px;color:#252423">Region</div>
<div class="a" style="left:1346px;top:305px;width:12px;height:12px;border-radius:2px;background:#f2c811"></div>
<svg style="left:1348px;top:307px" width="8" height="8" viewBox="0 0 8 8"><path d="M0.8 4 L3 6.2 L7.2 1.5" fill="none" stroke="#3b3a39" stroke-width="0.9"/></svg>
<div class="a" style="left:1363px;top:303px;font-size:15px;color:#252423;font-family:'Liberation Serif',serif">&#931;</div>
<div class="a" style="left:1383px;top:305px;font-size:11.8px;color:#252423">Volume</div>

</body></html>
